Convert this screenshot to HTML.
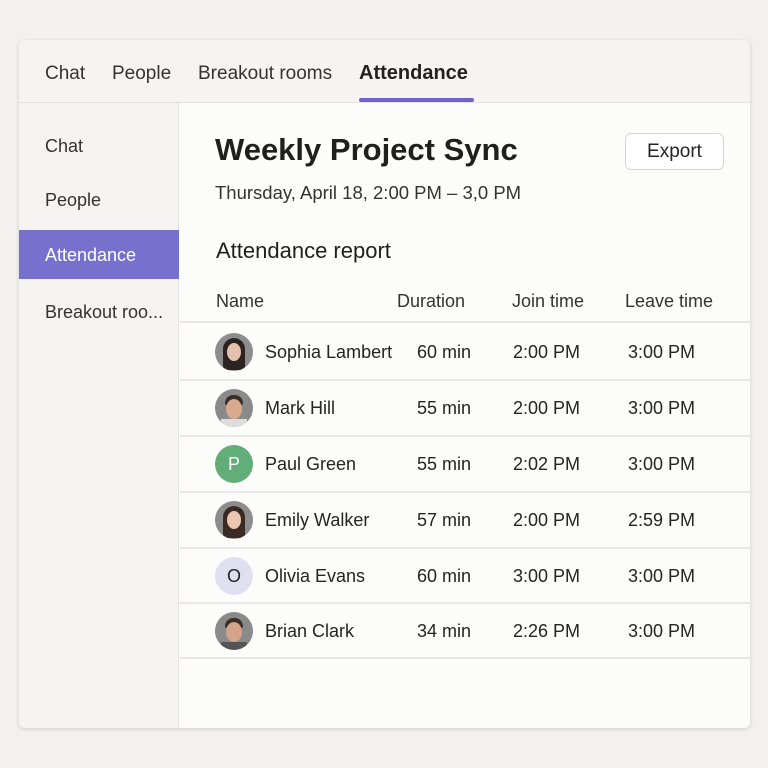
<!DOCTYPE html>
<html><head><meta charset="utf-8"><style>
*{margin:0;padding:0;box-sizing:border-box}
body{width:768px;height:768px;background:#f2f1f0;font-family:"Liberation Sans","DejaVu Sans",sans-serif;color:#242424;position:relative;overflow:hidden}
.card{position:absolute;left:19px;top:40px;width:731px;height:688px;background:#fcfcfb;border-radius:6px;box-shadow:0 1px 4px rgba(0,0,0,.15);overflow:hidden}
.top{position:absolute;left:0;top:0;width:731px;height:63px;background:#f5f4f3;border-bottom:1.5px solid #e3e2e1}
.t{position:absolute;top:23px;font-size:19px;color:#333}
.side{position:absolute;left:0;top:63px;width:160px;height:625px;background:#f5f4f3;border-right:1.5px solid #e3e2e1}
.s{position:absolute;left:26px;font-size:18px;color:#333}
.a{position:absolute;font-size:18px;color:#242424}
.line{position:absolute;left:161px;width:570px;height:1.5px;background:#e8e7e6}
.av{position:absolute;left:196px;width:38px;height:38px;border-radius:50%;background:#8a8a8a;overflow:hidden}
.hd{position:absolute;top:251px;font-size:18px;color:#333}
</style></head><body>
<div class="card">
 <div class="top">
  <span class="t" style="left:26px">Chat</span>
  <span class="t" style="left:93px">People</span>
  <span class="t" style="left:179px">Breakout rooms</span>
  <span class="t" style="left:340px;font-weight:bold;color:#222;font-size:20px;top:22px">Attendance</span>
  <div style="position:absolute;left:340px;top:58px;width:115px;height:4px;background:#6f63cf;border-radius:2px"></div>
 </div>
 <div class="side">
  <span class="s" style="top:33px">Chat</span>
  <span class="s" style="top:87px">People</span>
  <div style="position:absolute;left:0;top:127px;width:160px;height:49px;background:#7770cc"></div>
  <span class="s" style="top:142px;color:#fff">Attendance</span>
  <span class="s" style="top:199px">Breakout roo...</span>
 </div>
 <div style="position:absolute;left:196px;top:92px;font-size:31px;font-weight:bold;color:#1f1f1f">Weekly Project Sync</div>
 <div style="position:absolute;left:196px;top:142px;font-size:18.5px;color:#333">Thursday, April 18, 2:00 PM – 3,0 PM</div>
 <div style="position:absolute;left:606px;top:93px;width:99px;height:37px;border:1px solid #d6d5d4;border-radius:6px;background:#fff;font-size:19px;text-align:center;line-height:35px">Export</div>
 <div style="position:absolute;left:197px;top:198px;font-size:22px;color:#1f1f1f">Attendance report</div>
 <span class="hd" style="left:197px">Name</span>
 <span class="hd" style="left:378px">Duration</span>
 <span class="hd" style="left:493px">Join time</span>
 <span class="hd" style="left:606px">Leave time</span>
 <div class="line" style="top:281px"></div>
 <div class="line" style="top:339px"></div>
 <div class="line" style="top:395px"></div>
 <div class="line" style="top:451px"></div>
 <div class="line" style="top:507px"></div>
 <div class="line" style="top:562px"></div>
 <div class="line" style="top:617px"></div>

 <div class="av" style="top:293px;background:#8d8d8d"><div style="position:absolute;left:8px;top:5px;width:22px;height:32px;border-radius:11px 11px 4px 4px;background:#2a2321"></div><div style="position:absolute;left:12px;top:10px;width:14px;height:18px;border-radius:50%;background:#e4c1ad"></div></div>
 <div class="av" style="top:349px;background:#8a8a8a"><div style="position:absolute;left:10px;top:6px;width:18px;height:10px;border-radius:9px 9px 2px 2px;background:#3a2e28"></div><div style="position:absolute;left:11px;top:10px;width:16px;height:20px;border-radius:50%;background:#d9a98e"></div><div style="position:absolute;left:6px;top:30px;width:26px;height:10px;background:#ddd"></div></div>
 <div class="av" style="top:405px;background:#63ad78;color:#fff;font-size:18px;text-align:center;line-height:38px">P</div>
 <div class="av" style="top:461px;background:#8d8d8d"><div style="position:absolute;left:8px;top:5px;width:22px;height:32px;border-radius:11px 11px 4px 4px;background:#3a2a24"></div><div style="position:absolute;left:12px;top:10px;width:14px;height:18px;border-radius:50%;background:#ecc7b2"></div></div>
 <div class="av" style="top:517px;background:#dfdff0;color:#242424;font-size:18px;text-align:center;line-height:38px">O</div>
 <div class="av" style="top:572px;background:#8a8a8a"><div style="position:absolute;left:10px;top:6px;width:18px;height:10px;border-radius:9px 9px 2px 2px;background:#3a2e28"></div><div style="position:absolute;left:11px;top:10px;width:16px;height:20px;border-radius:50%;background:#d4a48a"></div><div style="position:absolute;left:6px;top:30px;width:26px;height:10px;background:#555"></div></div>

 <span class="a" style="left:246px;top:302px">Sophia Lambert</span><span class="a" style="left:398px;top:302px">60 min</span><span class="a" style="left:494px;top:302px">2:00 PM</span><span class="a" style="left:609px;top:302px">3:00 PM</span>
 <span class="a" style="left:246px;top:358px">Mark Hill</span><span class="a" style="left:398px;top:358px">55 min</span><span class="a" style="left:494px;top:358px">2:00 PM</span><span class="a" style="left:609px;top:358px">3:00 PM</span>
 <span class="a" style="left:246px;top:414px">Paul Green</span><span class="a" style="left:398px;top:414px">55 min</span><span class="a" style="left:494px;top:414px">2:02 PM</span><span class="a" style="left:609px;top:414px">3:00 PM</span>
 <span class="a" style="left:246px;top:470px">Emily Walker</span><span class="a" style="left:398px;top:470px">57 min</span><span class="a" style="left:494px;top:470px">2:00 PM</span><span class="a" style="left:609px;top:470px">2:59 PM</span>
 <span class="a" style="left:246px;top:526px">Olivia Evans</span><span class="a" style="left:398px;top:526px">60 min</span><span class="a" style="left:494px;top:526px">3:00 PM</span><span class="a" style="left:609px;top:526px">3:00 PM</span>
 <span class="a" style="left:246px;top:581px">Brian Clark</span><span class="a" style="left:398px;top:581px">34 min</span><span class="a" style="left:494px;top:581px">2:26 PM</span><span class="a" style="left:609px;top:581px">3:00 PM</span>
</div>
</body></html>
